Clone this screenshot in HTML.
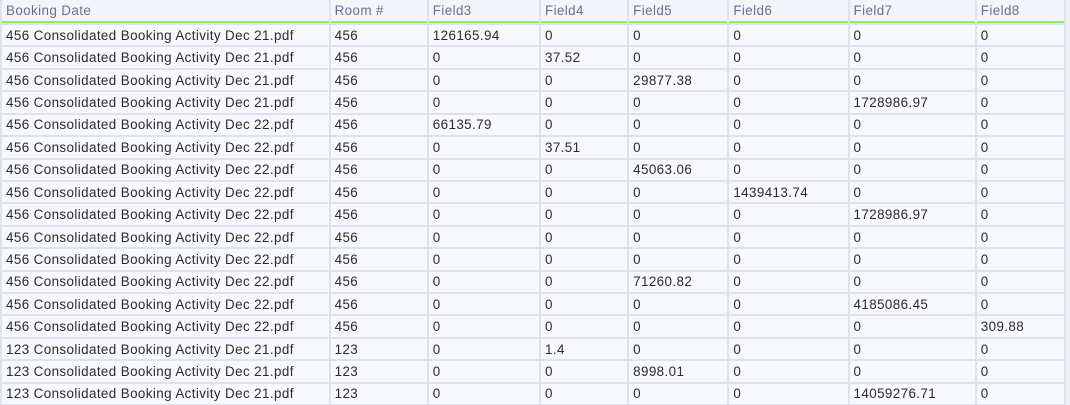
<!DOCTYPE html>
<html><head><meta charset="utf-8"><style>
html,body{margin:0;padding:0;background:#eef0f8;width:1070px;height:405px;overflow:hidden}
table{border-collapse:separate;border-spacing:2px;background:#dde2ef;margin:-2px 0 0 0;table-layout:fixed;width:1066px;font-family:"Liberation Sans",sans-serif;font-size:13.4px;letter-spacing:0.4px}
td,th{padding:0 0 0 4px;white-space:nowrap;overflow:hidden;text-align:left}
th{background:#f3f5fb;color:#6b7092;font-weight:normal;height:21px;border-bottom:2px solid #8fe870}
td{background:#f8f9fd;color:#2b2b2b;height:20.43px}
</style></head><body>
<table>
<colgroup><col style="width:326px"><col style="width:96px"><col style="width:110px"><col style="width:86px"><col style="width:98px"><col style="width:118px"><col style="width:125px"><col style="width:87px"></colgroup>
<tr><th>Booking Date</th><th>Room #</th><th>Field3</th><th>Field4</th><th>Field5</th><th>Field6</th><th>Field7</th><th>Field8</th></tr>
<tr><td>456 Consolidated Booking Activity Dec 21.pdf</td><td>456</td><td>126165.94</td><td>0</td><td>0</td><td>0</td><td>0</td><td>0</td></tr>
<tr><td>456 Consolidated Booking Activity Dec 21.pdf</td><td>456</td><td>0</td><td>37.52</td><td>0</td><td>0</td><td>0</td><td>0</td></tr>
<tr><td>456 Consolidated Booking Activity Dec 21.pdf</td><td>456</td><td>0</td><td>0</td><td>29877.38</td><td>0</td><td>0</td><td>0</td></tr>
<tr><td>456 Consolidated Booking Activity Dec 21.pdf</td><td>456</td><td>0</td><td>0</td><td>0</td><td>0</td><td>1728986.97</td><td>0</td></tr>
<tr><td>456 Consolidated Booking Activity Dec 22.pdf</td><td>456</td><td>66135.79</td><td>0</td><td>0</td><td>0</td><td>0</td><td>0</td></tr>
<tr><td>456 Consolidated Booking Activity Dec 22.pdf</td><td>456</td><td>0</td><td>37.51</td><td>0</td><td>0</td><td>0</td><td>0</td></tr>
<tr><td>456 Consolidated Booking Activity Dec 22.pdf</td><td>456</td><td>0</td><td>0</td><td>45063.06</td><td>0</td><td>0</td><td>0</td></tr>
<tr><td>456 Consolidated Booking Activity Dec 22.pdf</td><td>456</td><td>0</td><td>0</td><td>0</td><td>1439413.74</td><td>0</td><td>0</td></tr>
<tr><td>456 Consolidated Booking Activity Dec 22.pdf</td><td>456</td><td>0</td><td>0</td><td>0</td><td>0</td><td>1728986.97</td><td>0</td></tr>
<tr><td>456 Consolidated Booking Activity Dec 22.pdf</td><td>456</td><td>0</td><td>0</td><td>0</td><td>0</td><td>0</td><td>0</td></tr>
<tr><td>456 Consolidated Booking Activity Dec 22.pdf</td><td>456</td><td>0</td><td>0</td><td>0</td><td>0</td><td>0</td><td>0</td></tr>
<tr><td>456 Consolidated Booking Activity Dec 22.pdf</td><td>456</td><td>0</td><td>0</td><td>71260.82</td><td>0</td><td>0</td><td>0</td></tr>
<tr><td>456 Consolidated Booking Activity Dec 22.pdf</td><td>456</td><td>0</td><td>0</td><td>0</td><td>0</td><td>4185086.45</td><td>0</td></tr>
<tr><td>456 Consolidated Booking Activity Dec 22.pdf</td><td>456</td><td>0</td><td>0</td><td>0</td><td>0</td><td>0</td><td>309.88</td></tr>
<tr><td>123 Consolidated Booking Activity Dec 21.pdf</td><td>123</td><td>0</td><td>1.4</td><td>0</td><td>0</td><td>0</td><td>0</td></tr>
<tr><td>123 Consolidated Booking Activity Dec 21.pdf</td><td>123</td><td>0</td><td>0</td><td>8998.01</td><td>0</td><td>0</td><td>0</td></tr>
<tr><td>123 Consolidated Booking Activity Dec 21.pdf</td><td>123</td><td>0</td><td>0</td><td>0</td><td>0</td><td>14059276.71</td><td>0</td></tr>
</table>
</body></html>
